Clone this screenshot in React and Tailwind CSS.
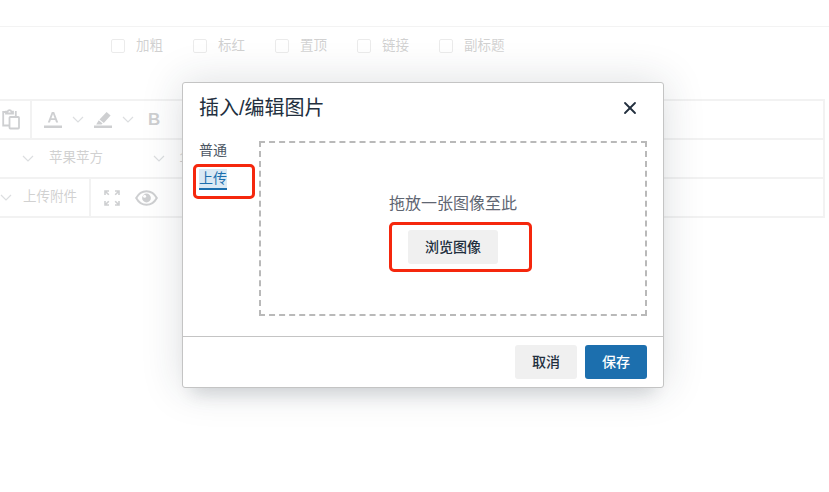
import React from 'react';
import { X } from 'lucide-react';

const font = { fontFamily: '"Liberation Sans", "Noto Sans CJK SC", sans-serif' };
const flags = ['加粗', '标红', '置顶', '链接', '副标题'];

function Chevron({ className }) {
  return (
    <svg width="12" height="7" viewBox="0 0 12 7" fill="none" stroke="#8a8f96" strokeWidth="1.2" className={className}>
      <path d="M1 1l5 5 5-5" />
    </svg>
  );
}

function ClipboardIcon() {
  return (
    <svg width="18" height="21" viewBox="0 0 18 21" fill="none" stroke="#5a5f66" strokeWidth="1.8">
      <path d="M6 3H1.2v13.5H7" />
      <path d="M4 4.5V2.6h1.6a2 2 0 0 1 3.8 0H11v1.9H4z" />
      <path d="M13 3h.8v4" />
      <rect x="7.5" y="8" width="9.5" height="11.5" rx="0.8" />
    </svg>
  );
}

function FontColorIcon() {
  return (
    <svg width="18" height="18" viewBox="0 0 18 18" fill="#5a5f66">
      <path d="M7.8 1h2.4l4 10.5h-2.1l-.9-2.5H6.8l-.9 2.5H3.8L7.8 1zm-.4 6.3h3.2L9 2.9 7.4 7.3z" />
      <rect x="0" y="14.5" width="18" height="2.5" />
    </svg>
  );
}

function HighlightIcon() {
  return (
    <svg width="18" height="18" viewBox="0 0 18 18" fill="#5a5f66">
      <path d="M12.6 1l4 3.4-6.8 7.7-4.3-3.6L12.6 1zM4.7 9.3l3.9 3.3-1.2 1H2.2l2.5-4.3z" />
      <rect x="0" y="14.5" width="18" height="2.5" />
    </svg>
  );
}

function FullscreenIcon() {
  return (
    <svg width="16" height="16" viewBox="0 0 16 16" fill="none" stroke="#5a5f66" strokeWidth="1.6">
      <path d="M1 5V1h4M11 1h4v4M15 11v4h-4M5 15H1v-4M1.2 1.2l3.6 3.6M14.8 1.2l-3.6 3.6M14.8 14.8l-3.6-3.6M1.2 14.8l3.6-3.6" />
    </svg>
  );
}

function EyeIcon() {
  return (
    <svg width="23" height="16" viewBox="0 0 23 16" className="ml-[15px]">
      <path d="M1.2 8C3.6 3.6 7.2 1.2 11.5 1.2S19.4 3.6 21.8 8c-2.4 4.4-6 6.8-10.3 6.8S3.6 12.4 1.2 8z" fill="none" stroke="#5a5f66" strokeWidth="2" />
      <circle cx="11.5" cy="8" r="4.4" fill="#5a5f66" />
      <circle cx="9.6" cy="6.2" r="1.5" fill="#fff" />
    </svg>
  );
}

function Background() {
  return (
    <div className="text-[#5a5f66]">
      <div className="h-[27px] border-b border-[#d8d8d8]" />
      <div className="flex h-[38px] items-center pl-[111px] text-[13.5px] text-[#666]">
        {flags.map((f) => (
          <label key={f} className="flex w-[82px] items-center">
            <span className="h-[14px] w-[14px] rounded-[2px] border border-[#bbb]" />
            <span className="ml-[11px]">{f}</span>
          </label>
        ))}
      </div>
      <div className="mt-[34px] mr-[4px] border-t-2 border-r-2 border-[#d4d4d4]">
        <div className="flex h-[39px] items-center border-b-2 border-[#d4d4d4]">
          <div className="flex h-full w-[32px] items-center border-r-2 border-[#d4d4d4] pl-[2px]">
            <ClipboardIcon />
          </div>
          <div className="ml-[12px]"><FontColorIcon /></div>
          <Chevron className="ml-[10px]" />
          <div className="ml-[10px]"><HighlightIcon /></div>
          <Chevron className="ml-[10px]" />
          <span className="ml-[14px] text-[17px] font-bold">B</span>
        </div>
        <div className="flex h-[39px] items-center border-b-2 border-[#d4d4d4] text-[13.5px] text-[#666]">
          <Chevron className="ml-[22px]" />
          <span className="ml-[15px] w-[54px]">苹果苹方</span>
          <Chevron className="ml-[50px]" />
          <span className="ml-[14px]">1</span>
        </div>
        <div className="flex h-[39px] items-center border-b-2 border-[#d4d4d4] text-[13.5px] text-[#666]">
          <div className="flex h-full w-[91px] items-center border-r-2 border-[#d4d4d4]">
            <Chevron />
            <span className="ml-[11px]">上传附件</span>
          </div>
          <div className="ml-[13px]"><FullscreenIcon /></div>
          <EyeIcon />
        </div>
      </div>
    </div>
  );
}

function Dialog() {
  return (
    <div className="h-[306px] w-[482px] rounded-[3px] border border-[#c4c4c4] bg-white text-[#222f3e] shadow-[0_16px_16px_-10px_rgba(34,47,62,0.15),0_0_40px_1px_rgba(34,47,62,0.15)]">
      <div className="flex h-[50px] items-center justify-between pr-[23px] pl-[16px]">
        <h1 className="text-[20px]">插入/编辑图片</h1>
        <X size={20} strokeWidth={2.2} />
      </div>
      <div className="flex h-[203px] pr-[16px] pl-[16px]">
        <div className="w-[60px] pt-[7px] text-[14px]">
          <div className="h-[29px] leading-[20px] text-[#4b5563]">普通</div>
          <div className="w-fit border-b-2 border-[#1c6fae] bg-[#dbe9f4] leading-[19px] text-[#1c6fae]">上传</div>
        </div>
        <div className="mt-[8px] flex h-[175px] flex-1 flex-col items-center border-2 border-dashed border-[#b9b9b9] pt-[49px]">
          <p className="text-[16px] leading-[24px] text-[#5f6672]">拖放一张图像至此</p>
          <button className="mt-[14px] h-[34px] w-[90px] rounded-[3px] bg-[#f0f0f0] text-[14px] font-medium">浏览图像</button>
        </div>
      </div>
      <div className="flex h-[51px] items-center justify-end gap-[8px] border-t border-[#c4c4c4] pr-[16px]">
        <button className="h-[34px] w-[62px] rounded-[3px] bg-[#f0f0f0] text-[14px] font-medium">取消</button>
        <button className="h-[34px] w-[62px] rounded-[3px] bg-[#1c6fae] text-[14px] font-medium text-white">保存</button>
      </div>
    </div>
  );
}

export default function App() {
  return (
    <div className="relative h-[492px] w-[829px] overflow-hidden bg-white" style={font}>
      <Background />
      {/* Overlay behind the dialog */}
      <div className="absolute inset-0 bg-white/70" />
      <div className="absolute top-[82px] left-[182px]">
        <Dialog />
      </div>
      {/* Red annotation boxes */}
      <div className="absolute top-[164px] left-[193px] h-[35px] w-[62px] rounded-[5px] border-[3px] border-[#f5270d]" />
      <div className="absolute top-[222px] left-[389px] h-[50px] w-[143px] rounded-[5px] border-[3px] border-[#f5270d]" />
    </div>
  );
}
